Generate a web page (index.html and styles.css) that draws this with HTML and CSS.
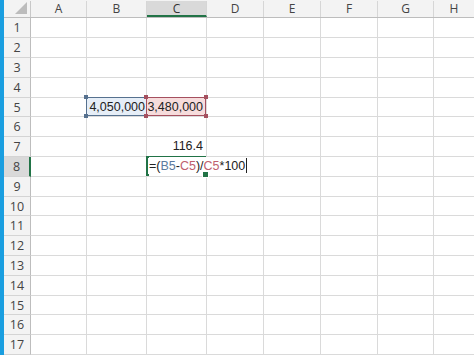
FILE: index.html
```html
<!DOCTYPE html>
<html lang="ja">
<head>
<meta charset="UTF-8" />
<meta name="viewport" content="width=device-width, initial-scale=1" />
<title>Sheet</title>
<link rel="stylesheet" href="styles.css">
</head>
<body>

<div class="app">
  <div class="strip"></div>
  <div class="sheet">
    <div class="topband"></div>
    <div class="row head">
      <div class="corner"><span class="tri"></span></div>
      <div class="col a">A</div>
      <div class="col b">B</div>
      <div class="col c active">C</div>
      <div class="col d">D</div>
      <div class="col e">E</div>
      <div class="col f">F</div>
      <div class="col g">G</div>
      <div class="col h">H</div>
    </div>
    <div id="rows"></div>
  </div>
</div>

<script>
  const rowsEl = document.getElementById('rows');
  const cols = ['a', 'b', 'c', 'd', 'e', 'f', 'g', 'h'];

  for (let r = 1; r <= 17; r++) {
    const row = document.createElement('div');
    row.className = 'row';

    const rh = document.createElement('div');
    rh.className = 'rh' + (r === 8 ? ' active' : '');
    rh.textContent = r;
    row.appendChild(rh);

    cols.forEach(function (c) {
      const cell = document.createElement('div');
      cell.className = 'cell ' + c;
      cell.id = c + r;
      row.appendChild(cell);
    });
    rowsEl.appendChild(row);
  }

  document.getElementById('b5').innerHTML =
    '<div class="ref blue">4,050,000<i class="dot tl"></i><i class="dot tr"></i><i class="dot bl"></i><i class="dot br"></i></div>';
  document.getElementById('c5').innerHTML =
    '<div class="ref red">3,480,000<i class="dot tl"></i><i class="dot tr"></i><i class="dot bl"></i><i class="dot br"></i></div>';
  document.getElementById('c7').innerHTML = '<span class="num">116.4</span>';
  document.getElementById('c8').innerHTML =
    '<div class="edit"><span class="formula">=(<span class="rb">B5</span>-<span class="rr">C5</span>)/<span class="rr">C5</span>*100<span class="caret"></span></span><i class="handle"></i></div>';
</script>

</body>
</html>
```

FILE: styles.css
```css
body {
  margin: 0;
  background: #fff;
  font-family: "Liberation Sans", Arial, sans-serif;
  color: #222;
  overflow: hidden;
}
.app {
  display: flex;
  height: 355px;
}
.strip {
  width: 4px;
  background: #1a9ee0;
  flex: none;
}
.sheet {
  flex: 1;
  display: flex;
  flex-direction: column;
}
.topband {
  height: 8px;
  background: #f3f3f3;
}
.row {
  display: flex;
  height: 19.8px;
  box-sizing: border-box;
  flex: none;
}
.row.head {
  height: 17px;
  background: #f3f3f3;
  border-bottom: 1px solid #bdbdbd;
}
.corner {
  width: 27px;
  flex: none;
  box-sizing: border-box;
  border-right: 1px solid #c8c8c8;
  position: relative;
}
.tri {
  position: absolute;
  right: 3px;
  bottom: 3px;
  width: 0;
  height: 0;
  border-left: 12px solid transparent;
  border-bottom: 12px solid #bcbcbc;
}
.a { width: 56px; }
.b { width: 60px; }
.c { width: 60px; }
.d { width: 57px; }
.e { width: 57px; }
.f { width: 57px; }
.g { width: 56px; }
.h { flex: 1; }
.col {
  flex: none;
  box-sizing: border-box;
  border-right: 1px solid #d6d6d6;
  text-align: center;
  font-family: "Open Sans", "Noto Sans", sans-serif;
  font-size: 12px;
  line-height: 16px;
  color: #444;
}
.col.h { flex: 1; border-right: none; }
.col.active {
  background: #d9d9d9;
  border-bottom: 2px solid #217346;
  color: #333;
}
.rh {
  width: 27px;
  flex: none;
  box-sizing: border-box;
  background: #f3f3f3;
  border-right: 1px solid #bdbdbd;
  border-bottom: 1px solid #d4d4d4;
  text-align: center;
  font-family: "Open Sans", "Noto Sans", sans-serif;
  font-size: 12.5px;
  line-height: 19px;
  color: #444;
}
.rh.active {
  background: #d9d9d9;
  border-right: 2px solid #217346;
}
.cell {
  flex: none;
  box-sizing: border-box;
  border-right: 1px solid #dadada;
  border-bottom: 1px solid #dadada;
  position: relative;
  font-size: 12.5px;
  line-height: 19px;
  text-align: right;
}
.cell.h { flex: 1; border-right: none; }
.num {
  padding-right: 3px;
}
.ref {
  position: absolute;
  left: -1px;
  top: -1px;
  right: 0;
  bottom: 0;
  box-sizing: border-box;
  padding-right: 1px;
  line-height: 18px;
  z-index: 1;
}
.ref.blue {
  background: #e6eef7;
  border: 1px solid #56718f;
  border-right: none;
}
.ref.red {
  background: #f6dcdc;
  border: 1px solid #a5505f;
  padding-right: 2px;
}
.dot {
  position: absolute;
  width: 4px;
  height: 4px;
}
.blue .dot { background: #56718f; }
.red .dot { background: #a5505f; }
.tl { left: -3px; top: -3px; }
.tr { right: -3px; top: -3px; }
.bl { left: -3px; bottom: -3px; }
.br { right: -3px; bottom: -3px; }
.blue .tr, .blue .br { right: -2px; }
.edit {
  position: absolute;
  left: -1px;
  top: -1px;
  right: 0;
  bottom: 0;
  border: 2px solid #217346;
  border-right: none;
  z-index: 2;
}
.formula {
  position: absolute;
  left: 1px;
  top: -1px;
  white-space: nowrap;
  background: #fff;
  padding-right: 2px;
  text-align: left;
  line-height: 19px;
  color: #222;
}
.rb { color: #5b7a9e; }
.rr { color: #c0606e; }
.caret {
  display: inline-block;
  width: 1px;
  height: 15px;
  background: #222;
  vertical-align: -3px;
  margin-left: 1px;
}
.handle {
  position: absolute;
  right: -3px;
  bottom: -4px;
  width: 5px;
  height: 5px;
  background: #217346;
  border: 1px solid #fff;
}
```
